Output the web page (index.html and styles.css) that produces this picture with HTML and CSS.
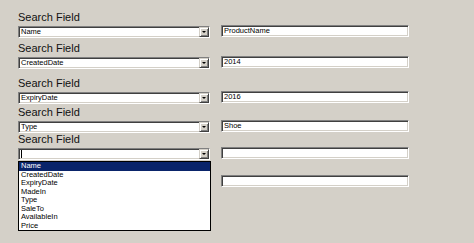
FILE: index.html
```html
<!DOCTYPE html>
<html lang="en">
<head>
	<meta charset="UTF-8">
	<title>Search Fields</title>
	<link rel="stylesheet" href="styles.css">
</head>
<body>
	<div class="form">
		<div class="group">
			<div class="label">Search Field</div>
			<div class="row">
				<div class="combo"><span class="combo-text">Name</span><span class="arrow"></span></div>
				<div class="textbox">ProductName</div>
			</div>
		</div>

		<div class="group g2">
			<div class="label">Search Field</div>
			<div class="row">
				<div class="combo"><span class="combo-text">CreatedDate</span><span class="arrow"></span></div>
				<div class="textbox">2014</div>
			</div>
		</div>

		<div class="group g3">
			<div class="label">Search Field</div>
			<div class="row">
				<div class="combo"><span class="combo-text">ExpiryDate</span><span class="arrow"></span></div>
				<div class="textbox">2016</div>
			</div>
		</div>

		<div class="group g4">
			<div class="label">Search Field</div>
			<div class="row">
				<div class="combo"><span class="combo-text">Type</span><span class="arrow"></span></div>
				<div class="textbox">Shoe</div>
			</div>
		</div>

		<div class="group g5">
			<div class="label">Search Field</div>
			<div class="row">
				<div class="combo open">
					<span class="combo-text"><span class="caret"></span></span><span class="arrow"></span>
					<ul class="dropdown">
						<li class="selected">Name</li>
						<li>CreatedDate</li>
						<li>ExpiryDate</li>
						<li>MadeIn</li>
						<li>Type</li>
						<li>SaleTo</li>
						<li>AvailableIn</li>
						<li>Price</li>
					</ul>
				</div>
				<div class="textbox"></div>
			</div>
		</div>

		<div class="row extra">
			<div class="spacer"></div>
			<div class="textbox"></div>
		</div>
	</div>
</body>
</html>
```

FILE: styles.css
```css
* {
	margin: 0;
	padding: 0;
	box-sizing: border-box;
}

html,
body {
	min-height: 100%;
}

body {
	background-color: #d4d0c8;
	font-family: 'Liberation Sans', Arial, sans-serif;
	color: #000;
}

.form {
	padding: 11px 0 60px 18px;
	min-height: 243px;
}

.label {
	font-size: 11px;
	line-height: 13px;
	height: 13px;
	margin-bottom: 2px;
	color: #111;
}

.g2 { margin-top: 4px; }
.g3 { margin-top: 8px; }
.g4 { margin-top: 2px; }
.g5 { margin-top: 0; }

.row {
	display: flex;
	align-items: flex-start;
	gap: 11px;
}

.combo,
.textbox {
	height: 12px;
	background: #fff;
	border: 1px solid;
	border-color: #808080 #fff #fff #808080;
	box-shadow: inset 1px 1px #404040, inset -1px -1px #d4d0c8;
	font-size: 7.5px;
	line-height: 10px;
}

.combo {
	position: relative;
	width: 192px;
	display: flex;
}

.combo-text {
	flex: 1;
	padding-left: 2px;
	display: flex;
	align-items: center;
}

.caret {
	display: block;
	width: 1px;
	height: 8px;
	background: #000;
}

.arrow {
	width: 10px;
	height: 10px;
	background: #d4d0c8;
	border: 1px solid;
	border-color: #d4d0c8 #404040 #404040 #d4d0c8;
	box-shadow: inset 1px 1px #fff, inset -1px -1px #808080;
	position: relative;
}

.arrow:after {
	content: '';
	position: absolute;
	left: 2px;
	top: 3px;
	border-left: 2px solid transparent;
	border-right: 2px solid transparent;
	border-top: 2px solid #000;
}

.textbox {
	width: 188px;
	padding-left: 2px;
	margin-top: -1px;
	color: #000;
}

.dropdown {
	position: absolute;
	left: -1px;
	top: 12px;
	width: 193px;
	height: 70px;
	list-style: none;
	background: #fff;
	border: 1px solid #000;
	font-size: 7.5px;
	line-height: 8.5px;
	z-index: 2;
}

.dropdown li {
	padding-left: 2px;
}

.dropdown li.selected {
	background: #0a246a;
	color: #fff;
}

.extra {
	margin-top: 16px;
}

.spacer {
	width: 192px;
}
```
